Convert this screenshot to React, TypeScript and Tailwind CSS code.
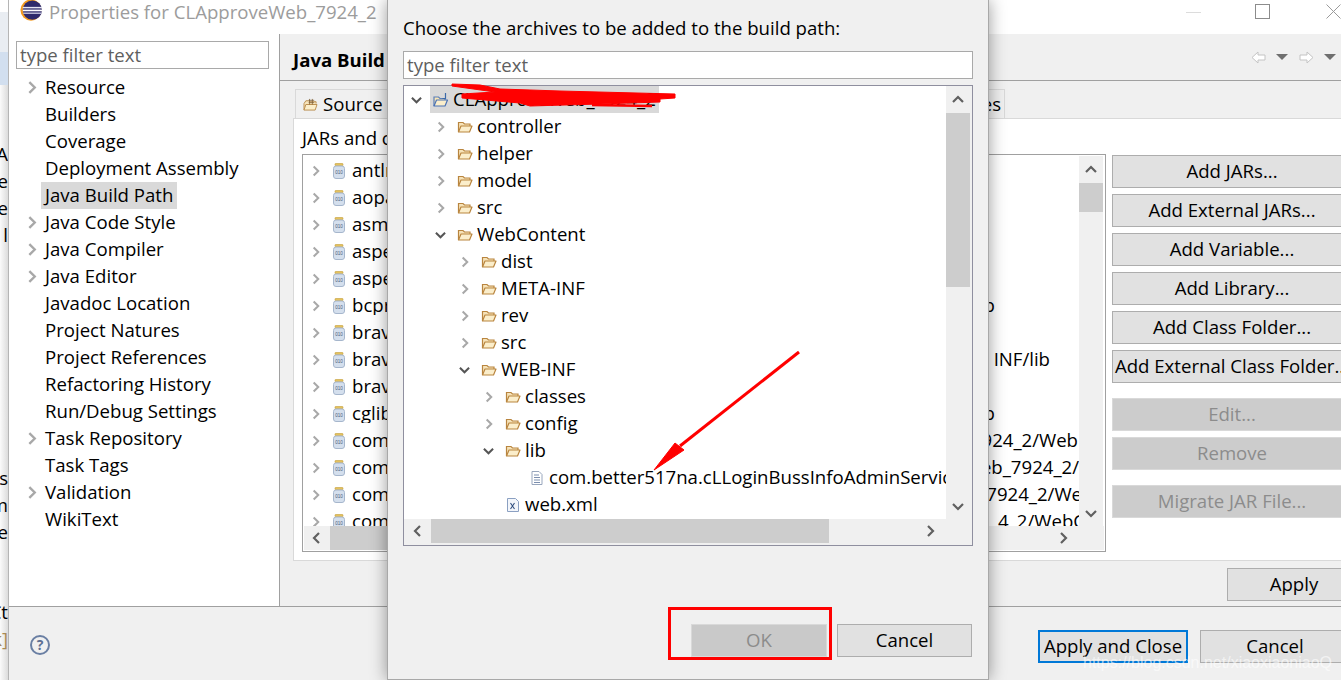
import type { ReactNode } from "react";

const leftTree = [
  { label: "Resource", arrow: true },
  { label: "Builders" },
  { label: "Coverage" },
  { label: "Deployment Assembly" },
  { label: "Java Build Path", selected: true },
  { label: "Java Code Style", arrow: true },
  { label: "Java Compiler", arrow: true },
  { label: "Java Editor", arrow: true },
  { label: "Javadoc Location" },
  { label: "Project Natures" },
  { label: "Project References" },
  { label: "Refactoring History" },
  { label: "Run/Debug Settings" },
  { label: "Task Repository", arrow: true },
  { label: "Task Tags" },
  { label: "Validation", arrow: true },
  { label: "WikiText" },
];

const jars = [
  { name: "antlr", tail: "", tailClass: "" },
  { name: "aopalliance", tail: "", tailClass: "" },
  { name: "asm", tail: "", tailClass: "" },
  { name: "aspectjrt", tail: "", tailClass: "" },
  { name: "aspectjweaver", tail: "", tailClass: "" },
  { name: "bcprov", tail: "lib", tailClass: "pr-[84px]" },
  { name: "bravo-core", tail: "", tailClass: "" },
  { name: "bravo-web", tail: "INF/lib", tailClass: "pr-[29px]" },
  { name: "bravo-util", tail: "", tailClass: "" },
  { name: "cglib", tail: "lib", tailClass: "pr-[84px]" },
  { name: "com.a", tail: "7924_2/Web", tailClass: "pr-px" },
  { name: "com.b", tail: "eb_7924_2/", tailClass: "pr-0" },
  { name: "com.c", tail: "7924_2/We", tailClass: "-mr-[3px]" },
  { name: "com.d", tail: "4_2/WebC", tailClass: "-mr-[6px]" },
];

type Kind = "project" | "folder" | "file" | "xml";
const dialogTree: { label: string; depth: number; state?: "open" | "closed"; kind: Kind; selected?: boolean }[] = [
  { label: "CLApproveWeb_7924_2", depth: 0, state: "open", kind: "project", selected: true },
  { label: "controller", depth: 1, state: "closed", kind: "folder" },
  { label: "helper", depth: 1, state: "closed", kind: "folder" },
  { label: "model", depth: 1, state: "closed", kind: "folder" },
  { label: "src", depth: 1, state: "closed", kind: "folder" },
  { label: "WebContent", depth: 1, state: "open", kind: "folder" },
  { label: "dist", depth: 2, state: "closed", kind: "folder" },
  { label: "META-INF", depth: 2, state: "closed", kind: "folder" },
  { label: "rev", depth: 2, state: "closed", kind: "folder" },
  { label: "src", depth: 2, state: "closed", kind: "folder" },
  { label: "WEB-INF", depth: 2, state: "open", kind: "folder" },
  { label: "classes", depth: 3, state: "closed", kind: "folder" },
  { label: "config", depth: 3, state: "closed", kind: "folder" },
  { label: "lib", depth: 3, state: "open", kind: "folder" },
  { label: "com.better517na.cLLoginBussInfoAdminServiceContract.jar", depth: 4, kind: "file" },
  { label: "web.xml", depth: 3, kind: "xml" },
];

function Chevron({ dir, className }: { dir: "right" | "down" | "up" | "left"; className?: string }) {
  const points = {
    right: "4,1 9,6 4,11",
    left: "8,1 3,6 8,11",
    down: "1,4 6,9 11,4",
    up: "1,8 6,3 11,8",
  }[dir];
  return (
    <svg viewBox="0 0 12 12" className={className} fill="none" stroke="currentColor" strokeWidth="2.2">
      <polyline points={points} />
    </svg>
  );
}

function FolderIcon() {
  return (
    <svg viewBox="0 0 16 16" className="w-4 h-4">
      <path d="M1.5 13V3.5h4.5l1.5 1.5h5.5V7" fill="#f6e3b8" stroke="#b9853f" strokeWidth="1.2" />
      <path d="M1.5 13l2.5-6h11l-2.5 6z" fill="#fbeecb" stroke="#b9853f" strokeWidth="1.2" strokeLinejoin="round" />
    </svg>
  );
}

function ProjectIcon() {
  return (
    <svg viewBox="0 0 16 16" className="w-4 h-4">
      <path d="M1 14V5h4.5l1.5 1.5h5V8" fill="#fbe7b5" stroke="#5b7fb8" strokeWidth="1.2" />
      <path d="M1 14l2.5-6h11L12 14z" fill="#fbeecb" stroke="#4a72b5" strokeWidth="1.2" strokeLinejoin="round" />
      <path d="M12.5 1v5.5h-3" fill="none" stroke="#3c6aa8" strokeWidth="1.2" />
    </svg>
  );
}

function FileIcon() {
  return (
    <svg viewBox="0 0 16 16" className="w-4 h-4">
      <path d="M3 1.5h7l3 3v10H3z" fill="#fff" stroke="#98a6bd" />
      <path d="M5 5h5M5 7.5h6M5 10h6M5 12.5h6" stroke="#7b8eae" />
    </svg>
  );
}

function XmlIcon() {
  return (
    <svg viewBox="0 0 16 16" className="w-4 h-4">
      <path d="M2.5 1.5h8l3 3v10h-11z" fill="#f3f6fb" stroke="#8ba0c2" />
      <path d="M5.5 6l4 6M9.5 6l-4 6" stroke="#33507f" strokeWidth="1.1" />
    </svg>
  );
}

function JarIcon() {
  return (
    <svg viewBox="0 0 12 16" className="w-3 h-4">
      <rect x="2" y="0.5" width="8" height="2.2" rx="0.6" fill="#e5c25d" stroke="#c29d3a" strokeWidth="0.6" />
      <rect x="0.5" y="3" width="11" height="12.5" rx="2.5" fill="#d4dfed" stroke="#a6b6cc" />
      <text x="6" y="11" fontSize="4.6" textAnchor="middle" fill="#4d5e78" fontFamily="Liberation Sans, sans-serif">010</text>
    </svg>
  );
}

function TreeIcon({ kind }: { kind: Kind }) {
  if (kind === "project") return <ProjectIcon />;
  if (kind === "folder") return <FolderIcon />;
  if (kind === "file") return <FileIcon />;
  return <XmlIcon />;
}

function Btn({ children, disabled, className = "" }: { children: ReactNode; disabled?: boolean; className?: string }) {
  return (
    <div
      className={`h-[33px] shrink-0 flex items-center justify-center whitespace-nowrap border ${
        disabled ? "bg-[#cccccc] border-[#d9d9d9] text-[#8c8c8c]" : "bg-[#e1e1e1] border-[#adadad] text-black"
      } ${className}`}
    >
      {children}
    </div>
  );
}

function NavArrow({ flip }: { flip?: boolean }) {
  return (
    <svg viewBox="0 0 15 13" className={`w-[15px] h-[13px] ${flip ? "-scale-x-100" : ""}`} fill="#fff" stroke="#c4c4c4">
      <path d="M1 6.5L7 1v3h7v5H7v3z" />
    </svg>
  );
}

function NavDrop() {
  return <div className="w-0 h-0 border-x-[6px] border-x-transparent border-t-[6px] border-t-[#6f6f6f]" />;
}

function BackgroundStrip() {
  const slivers = [
    { text: "A", cls: "mt-[56px]" },
    { text: "he", cls: "" },
    { text: "e", cls: "" },
    { text: "l", cls: "" },
    { text: "os", cls: "mt-[216px]" },
    { text: "m", cls: "" },
    { text: "e", cls: "" },
    { text: "Ct", cls: "mt-[53px]" },
    { text: "k]", cls: "text-[#a98a55]" },
  ];
  return (
    <div className="w-[9px] shrink-0 flex flex-col overflow-hidden bg-gradient-to-r from-[#fbfbfb] to-[#dcdcdc] border-r border-[#b5b5b5]">
      <div className="h-[12px] shrink-0 bg-white" />
      <div className="h-[40px] shrink-0 bg-[#e9edf2]" />
      <div className="h-[33px] shrink-0 bg-[#d2dfef]" />
      {slivers.map((s, i) => (
        <div key={i} className={`h-[27px] shrink-0 flex justify-end items-center ${s.cls}`}>
          <span className="shrink-0">{s.text}</span>
        </div>
      ))}
    </div>
  );
}

function LeftPane() {
  return (
    <div className="w-[271px] shrink-0 bg-white border-r border-[#a0a0a0] pt-[7px] pl-[7px]">
      <div className="w-[253px] h-[28px] border border-[#a9a9a9] flex items-center pl-[3px] text-[#5f5f5f]">type filter text</div>
      <div className="mt-[5px]">
        {leftTree.map((item) => (
          <div key={item.label} className="h-[27px] flex items-center">
            <div className="w-[25px] pl-[9px] shrink-0">
              {item.arrow && <Chevron dir="right" className="w-[13px] h-[15px] text-[#a8a8a8]" />}
            </div>
            <span className={`px-[4px] h-[27px] flex items-center ${item.selected ? "bg-[#d9d9d9]" : ""}`}>{item.label}</span>
          </div>
        ))}
      </div>
    </div>
  );
}

function JarList() {
  return (
    <div className="w-[804px] h-[398px] shrink-0 border border-[#a0a0a0] flex flex-col p-px">
      <div className="flex flex-1 min-h-0">
        <div className="w-[775px] shrink-0 overflow-hidden pt-px">
          {jars.map((jar) => (
            <div key={jar.name} className="h-[27px] flex items-center justify-between whitespace-nowrap">
              <div className="flex items-center shrink-0">
                <div className="w-[22px] flex justify-center shrink-0">
                  <Chevron dir="right" className="w-[11px] h-[12px] text-[#a8a8a8]" />
                </div>
                <div className="w-[26px] pl-[7px] shrink-0 flex">
                  <JarIcon />
                </div>
                <span className="w-[36px] overflow-hidden">{jar.name}</span>
              </div>
              {jar.tail && <span className={`shrink-0 ${jar.tailClass}`}>{jar.tail}</span>}
            </div>
          ))}
        </div>
        <div className="w-[24px] shrink-0 bg-[#f0f0f0] flex flex-col items-center">
          <div className="h-[27px] shrink-0 flex items-center justify-center">
            <Chevron dir="up" className="w-3 h-3 text-[#606060]" />
          </div>
          <div className="w-full h-[29px] shrink-0 bg-[#cdcdcd]" />
          <div className="flex-1" />
          <div className="h-[27px] shrink-0 flex items-center justify-center">
            <Chevron dir="down" className="w-3 h-3 text-[#606060]" />
          </div>
        </div>
        <div className="w-px" />
      </div>
      <div className="h-[24px] shrink-0 bg-[#f0f0f0] flex items-center">
        <div className="w-[26px] shrink-0 flex justify-center">
          <Chevron dir="left" className="w-3 h-3 text-[#606060]" />
        </div>
        <div className="w-[400px] h-full shrink-0 bg-[#cdcdcd]" />
        <div className="flex-1" />
        <div className="w-[26px] shrink-0 flex justify-center mr-[28px]">
          <Chevron dir="right" className="w-3 h-3 text-[#606060]" />
        </div>
      </div>
    </div>
  );
}

function RightPane() {
  return (
    <div className="flex-1 min-w-0 flex flex-col bg-[#f0f0f0]">
      <div className="h-[47px] shrink-0 flex items-center border-b border-[#a0a0a0] pl-[13px]">
        <span className="font-bold mt-[6px]">Java Build</span>
        <div className="ml-auto mr-[25px] flex items-center">
          <NavArrow />
          <div className="ml-[10px] mr-[11px]">
            <NavDrop />
          </div>
          <NavArrow flip />
          <div className="ml-[10px]">
            <NavDrop />
          </div>
        </div>
      </div>
      <div className="h-[480px] shrink-0 pl-[13px] flex flex-col">
        <div className="flex h-[38px] pt-[8px] pl-[2px] shrink-0 border-b border-[#d9d9d9]">
          <div className="w-[100px] border border-b-0 border-[#d9d9d9] flex items-center pl-[7px] gap-[5px]">
            <svg viewBox="0 0 16 14" className="w-[15px] h-[13px]">
              <path d="M1 13V6l2-3h3l1 1h7v2" fill="#f8e6bd" stroke="#b98a4a" />
              <path d="M1 13l2-6h12l-2 6z" fill="#fbeecb" stroke="#b98a4a" />
              <path d="M7 1v6M10 1v6M6 2.5h6M6 5h6" stroke="#7a5a30" strokeWidth="0.8" />
            </svg>
            Source
          </div>
          <div className="w-[610px] border-t border-r border-[#d9d9d9] flex items-center justify-end pr-[3px]">Dependencies</div>
        </div>
        <div className="flex-1 min-h-0 bg-white border-l border-b border-[#d9d9d9] pl-[8px]">
          <div className="h-[35px] flex items-center pt-[3px] whitespace-nowrap">JARs and c</div>
          <div className="flex items-start">
            <JarList />
            <div className="ml-[6px] mt-px w-[240px] shrink-0 flex flex-col">
              <Btn>Add JARs...</Btn>
              <Btn className="mt-[6px]">Add External JARs...</Btn>
              <Btn className="mt-[6px]">Add Variable...</Btn>
              <Btn className="mt-[6px]">Add Library...</Btn>
              <Btn className="mt-[6px]">Add Class Folder...</Btn>
              <Btn className="mt-[6px]">Add External Class Folder...</Btn>
              <Btn disabled className="mt-[15px]">Edit...</Btn>
              <Btn disabled className="mt-[6px]">Remove</Btn>
              <Btn disabled className="mt-[15px]">Migrate JAR File...</Btn>
            </div>
          </div>
        </div>
      </div>
      <div className="flex-1 flex justify-end items-start pt-[7px]">
        <Btn className="w-[134px]">Apply</Btn>
      </div>
    </div>
  );
}

function ChooseDialog() {
  return (
    <div className="absolute left-[387px] top-0 w-[602px] h-[680px] bg-[#f0f0f0] border-x border-b border-[#a8a8a8] shadow-[0_0_16px_rgba(0,0,0,0.4)] pl-[15px] pr-[15px] flex flex-col">
      <div className="h-[51px] shrink-0 flex items-center pt-[5px]">Choose the archives to be added to the build path:</div>
      <div className="w-[570px] h-[28px] shrink-0 border border-[#a9a9a9] bg-white flex items-center pl-[3px] text-[#5f5f5f]">type filter text</div>
      <div className="w-[570px] h-[461px] shrink-0 mt-[6px] border border-[#8f8f9f] bg-[#f0f0f0] flex flex-col">
        <div className="flex flex-1 min-h-0">
          <div className="w-[542px] shrink-0 bg-white overflow-hidden">
            {dialogTree.map((row, i) => (
              <div key={i} className="h-[27px] flex items-center whitespace-nowrap" style={{ paddingLeft: row.depth * 24 }}>
                <div className="w-[24px] shrink-0 flex justify-center">
                  {row.state === "closed" && <Chevron dir="right" className="w-[11px] h-[12px] text-[#a8a8a8]" />}
                  {row.state === "open" && <Chevron dir="down" className="w-[11px] h-[11px] text-[#555555]" />}
                </div>
                <div className={`ml-[2px] h-[27px] flex items-center pl-[3px] pr-[3px] ${row.selected ? "bg-[#d9d9d9]" : ""}`}>
                  <div className="w-[20px] shrink-0 flex">
                    <TreeIcon kind={row.kind} />
                  </div>
                  <span>{row.label}</span>
                </div>
              </div>
            ))}
          </div>
          <div className="w-[24px] shrink-0 flex flex-col items-center">
            <div className="h-[27px] shrink-0 flex items-center justify-center">
              <Chevron dir="up" className="w-3 h-3 text-[#606060]" />
            </div>
            <div className="w-full h-[174px] shrink-0 bg-[#cdcdcd]" />
            <div className="flex-1" />
            <div className="h-[27px] shrink-0 flex items-center justify-center">
              <Chevron dir="down" className="w-3 h-3 text-[#606060]" />
            </div>
          </div>
        </div>
        <div className="h-[26px] shrink-0 flex items-center pb-[2px]">
          <div className="w-[27px] shrink-0 flex justify-center">
            <Chevron dir="left" className="w-3 h-3 text-[#606060]" />
          </div>
          <div className="w-[398px] h-full shrink-0 bg-[#cdcdcd]" />
          <div className="flex-1" />
          <div className="w-[24px] shrink-0 flex justify-center mr-[30px]">
            <Chevron dir="right" className="w-3 h-3 text-[#606060]" />
          </div>
        </div>
      </div>
      <div className="flex justify-end mt-[78px] gap-[10px] pr-px">
        <Btn disabled className="w-[136px] !bg-[#c9c9c9]">OK</Btn>
        <Btn className="w-[135px] bg-[#e1e1e1]">Cancel</Btn>
      </div>
    </div>
  );
}

export default function App() {
  return (
    <div className="relative w-[1341px] h-[680px] overflow-hidden flex bg-white text-[18.6px] leading-none text-black font-['Open_Sans','Noto_Sans',sans-serif]">
      <BackgroundStrip />
      <div className="w-[1352px] shrink-0 flex flex-col">
        <div className="h-[34px] shrink-0 flex items-start pt-[2px] pl-[10px] text-[#9c9c9c] bg-white relative">
          <svg viewBox="0 0 24 24" className="w-[24px] h-[22px] -mt-[2px] shrink-0">
            <circle cx="12" cy="11" r="11.5" fill="#f39a1f" />
            <circle cx="13.5" cy="11" r="10.5" fill="#2e2a6b" />
            <rect x="3" y="7.5" width="21" height="1.6" fill="#e6e6f2" />
            <rect x="3" y="10.5" width="21" height="1.8" fill="#fff" />
            <rect x="3.5" y="13.7" width="20" height="1.4" fill="#d0d0e4" />
          </svg>
          <span className="ml-[6px] mt-px whitespace-nowrap">Properties for CLApproveWeb_7924_2</span>
          <div className="ml-auto mt-[2px] flex items-start mr-[20px]">
            <div className="w-[15px] h-px bg-[#dcdcdc] mt-[8px]" />
            <div className="w-[15px] h-[15px] border border-[#8c8c8c] ml-[54px]" />
            <svg viewBox="0 0 15 15" className="w-[15px] h-[15px] ml-[56px]" stroke="#9a9a9a" fill="none">
              <path d="M0.5 0.5L14.5 14.5M14.5 0.5L0.5 14.5" />
            </svg>
          </div>
        </div>
        <div className="h-[572px] shrink-0 flex">
          <LeftPane />
          <RightPane />
        </div>
        <div className="h-[74px] shrink-0 bg-[#f0f0f0] border-t border-[#a0a0a0] flex items-start pl-[21px] pt-[23px]">
          <div className="w-[20px] h-[20px] mt-[5px] rounded-full border-2 border-[#6a7fa3] flex items-center justify-center text-[14px] font-bold text-[#5d6f92] shrink-0">?</div>
          <div className="ml-auto flex gap-[12px] mr-[11px]">
            <div className="w-[150px] h-[33px] shrink-0 bg-[#e1e1e1] border-2 border-[#0078d7] flex items-center justify-center whitespace-nowrap">Apply and Close</div>
            <Btn className="w-[150px]">Cancel</Btn>
          </div>
        </div>
      </div>
      <ChooseDialog />
      {/* red annotations drawn over the screenshot */}
      <svg viewBox="0 0 1341 680" className="absolute inset-0 w-[1341px] h-[680px] pointer-events-none" fill="none" stroke="#ff0000">
        <path
          d="M452 84L480 85L500 89L560 91L675 94L675 98L660 99L660 102L600 104L530 106L520 103L462 98L462 94L495 92L452 86z"
          fill="#ff0000"
          strokeWidth="1"
        />
        <path d="M592 105L652 106" strokeWidth="2.5" />
        <path d="M799 352L680 446" strokeWidth="3" />
        <path d="M654 470L675 443L684 450z" fill="#ff0000" strokeWidth="1" />
      </svg>
      <div className="absolute left-[668px] top-[607px] w-[164px] h-[53px] border-[3px] border-[#ff0000]" />
      <div className="absolute left-[1083px] top-[655px] text-[16px] text-white/60 whitespace-nowrap font-['Liberation_Sans',sans-serif]">https://blog.csdn.net/xiaoxiaoniaoQ</div>
    </div>
  );
}
